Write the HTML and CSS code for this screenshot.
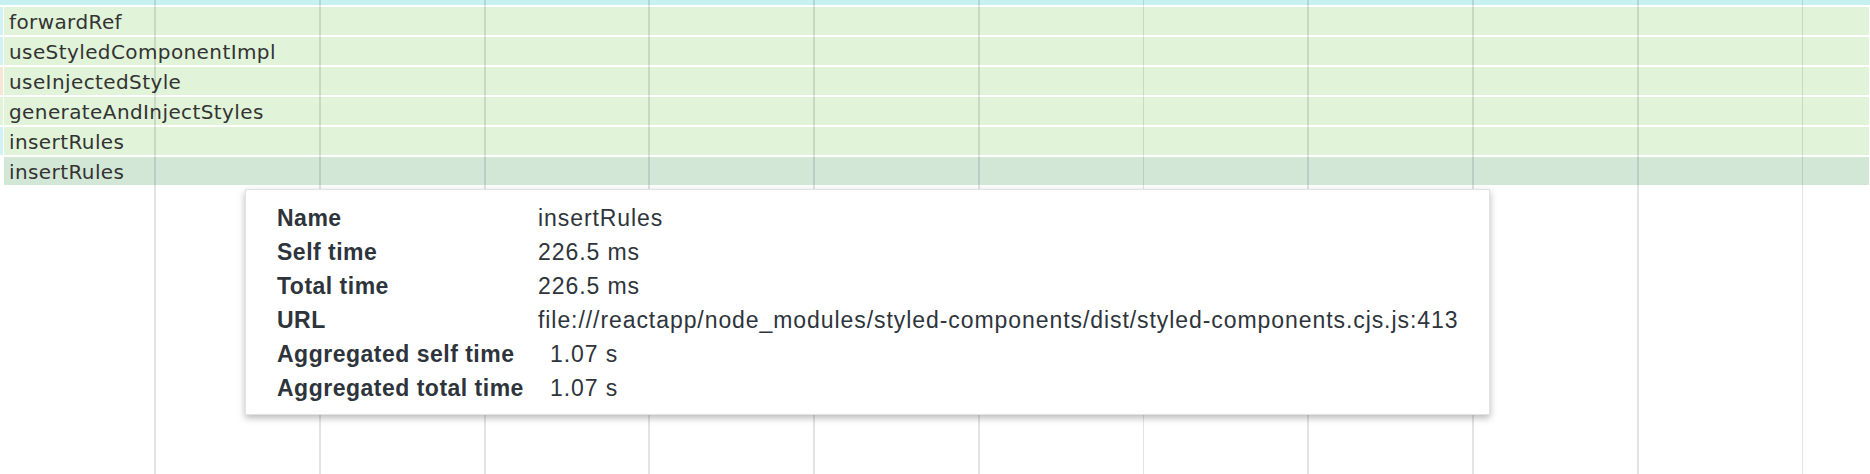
FILE: index.html
```html
<!DOCTYPE html>
<html lang="en">
<head>
  <meta charset="UTF-8">
  <title>Flame chart - insertRules</title>
  <link rel="stylesheet" href="styles.css">
</head>
<body>

  <!-- Flame chart -->
  <div class="chart">
    <div class="frame-row frame-row-top">
      <div class="frame frame-cyan"></div>
    </div>
    <div class="frame-row">
      <div class="edge edge-cyan"></div>
      <div class="frame">forwardRef</div>
    </div>
    <div class="frame-row">
      <div class="edge edge-cyan"></div>
      <div class="frame">useStyledComponentImpl</div>
    </div>
    <div class="frame-row">
      <div class="edge edge-orange"></div>
      <div class="frame">useInjectedStyle</div>
    </div>
    <div class="frame-row">
      <div class="edge edge-green"></div>
      <div class="frame">generateAndInjectStyles</div>
    </div>
    <div class="frame-row">
      <div class="edge edge-cyan"></div>
      <div class="frame">insertRules</div>
    </div>
    <div class="frame-row">
      <div class="edge"></div>
      <div class="frame frame-selected">insertRules</div>
    </div>

    <!-- Time grid overlay -->
    <div class="grid-lines"></div>

    <!-- Hover tooltip -->
    <div class="tooltip">
      <div class="tooltip-label">Name</div>
      <div class="tooltip-value">insertRules</div>
      <div class="tooltip-label">Self time</div>
      <div class="tooltip-value">226.5 ms</div>
      <div class="tooltip-label">Total time</div>
      <div class="tooltip-value">226.5 ms</div>
      <div class="tooltip-label">URL</div>
      <div class="tooltip-value">file:///reactapp/node_modules/styled-components/dist/styled-components.cjs.js:413</div>
      <div class="tooltip-label">Aggregated self time</div>
      <div class="tooltip-value tooltip-num">1.07 s</div>
      <div class="tooltip-label">Aggregated total time</div>
      <div class="tooltip-value tooltip-num">1.07 s</div>
    </div>
  </div>

</body>
</html>
```

FILE: styles.css
```css
body {
  margin: 0;
  background: #fff;
  font-family: "DejaVu Sans", sans-serif;
}
.chart {
  position: relative;
  height: 474px;
  overflow: hidden;
}
/* Frame rows */
.frame-row {
  display: flex;
  height: 28px;
  margin-top: 2px;
  padding-right: 1px;
}
.frame-row-top {
  height: 5px;
  margin-top: 0;
  padding-right: 0;
}
.edge {
  width: 3px;
  margin-right: 1px;
}
.edge-cyan {
  background-color: #d2f1f2;
}
.edge-orange {
  background-color: #f6e6d6;
}
.edge-green {
  background-color: #e1f4d9;
}
.frame {
  flex: 1;
  background-color: #e1f4d9;
  color: #333;
  font-size: 20px;
  letter-spacing: 0.4px;
  line-height: 30px;
  padding-left: 5px;
  white-space: nowrap;
  overflow: hidden;
}
.frame-cyan {
  background-color: #c7f0f0;
}
.frame-selected {
  background-color: #d3e7d7;
}
/* Grid lines */
.grid-lines {
  position: absolute;
  top: 0;
  left: 0;
  right: 0;
  bottom: 0;
  pointer-events: none;
  background-image: repeating-linear-gradient(to right,
    transparent 0, transparent 154px,
    rgba(0,0,0,0.11) 154px, rgba(0,0,0,0.11) 156px,
    transparent 156px, transparent 164.75px);
  background-position: 0 0;
}
/* Tooltip */
.tooltip {
  position: absolute;
  left: 245px;
  top: 189px;
  width: 1245px;
  box-sizing: border-box;
  padding: 11px 32px 9px 31px;
  background: #fff;
  border: 1px solid #e2e2e2;
  box-shadow: 0 3px 7px rgba(0,0,0,0.28);
  display: grid;
  grid-template-columns: 261px auto;
  font-family: "Liberation Sans", Arial, sans-serif;
  font-size: 23px;
  line-height: 34px;
  color: #2e343b;
}
.tooltip-label {
  font-weight: bold;
  letter-spacing: 0.5px;
  white-space: nowrap;
}
.tooltip-value {
  letter-spacing: 0.93px;
  white-space: nowrap;
}
.tooltip-num {
  padding-left: 12px;
}
```
